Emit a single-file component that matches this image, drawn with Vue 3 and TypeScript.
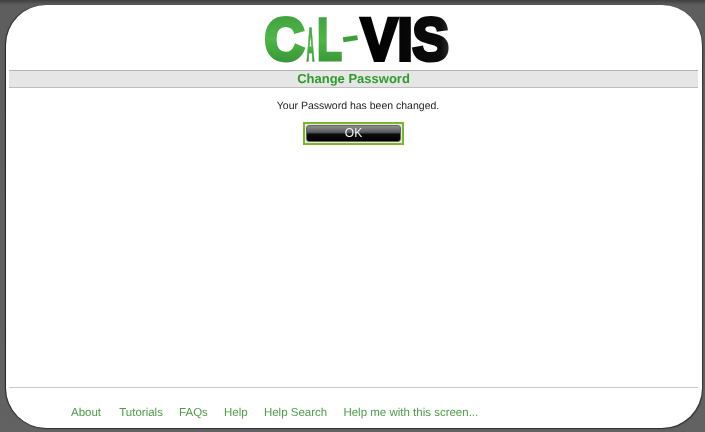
<script setup lang="ts">
const links: string[] = ['About', 'Tutorials', 'FAQs', 'Help', 'Help Search', 'Help me with this screen...']
</script>

<template>
  <div class="page">
    <div class="card">
      <header class="logo">
        <svg class="logo-art" width="190" height="52" viewBox="0 0 190 52" role="img" aria-label="CAL-VIS">
          <defs>
            <linearGradient id="gr" x1="0" y1="0" x2="0" y2="1">
              <stop offset="0" stop-color="#3b9a3a" />
              <stop offset="0.5" stop-color="#4fb548" />
              <stop offset="1" stop-color="#2f8a30" />
            </linearGradient>
            <linearGradient id="bk" x1="0" y1="0" x2="1" y2="0">
              <stop offset="0" stop-color="#000" />
              <stop offset="0.9" stop-color="#0c0c0c" />
              <stop offset="1" stop-color="#2a2a2a" />
            </linearGradient>
          </defs>
          <text class="glyph g" x="1.5" y="46.5" font-size="60" textLength="40" lengthAdjust="spacingAndGlyphs">C</text>
          <text class="glyph g thin" x="43.5" y="48" font-size="48" textLength="8" lengthAdjust="spacingAndGlyphs">A</text>
          <text class="glyph g narrow" x="54" y="47" font-size="60" textLength="25" lengthAdjust="spacingAndGlyphs">L</text>
          <text class="dash" x="78" y="36.5" font-size="42" textLength="19" lengthAdjust="spacingAndGlyphs" transform="rotate(-8 87 26)">-</text>
          <text class="glyph k" x="98" y="47" font-size="60" textLength="88" lengthAdjust="spacingAndGlyphs">VIS</text>
        </svg>
      </header>
      <h1 class="band">Change Password</h1>
      <main class="body">
        <p class="msg">Your Password has been changed.</p>
        <div class="btn-frame">
          <button class="btn" type="button">OK</button>
        </div>
      </main>
      <footer class="foot">
        <a v-for="l in links" :key="l" class="link">{{ l }}</a>
      </footer>
    </div>
  </div>
</template>

<style>
html, body { margin: 0; padding: 0; background: #5f5f5f; }
</style>

<style scoped>
.page {
  width: 705px;
  height: 432px;
  box-sizing: border-box;
  padding: 5px 3px 4px 6px;
  background: linear-gradient(#3f3f3f 0, #5e5e5e 5px, #626262 100%);
  font-family: "Liberation Sans", Arial, sans-serif;
  text-rendering: geometricPrecision;
  overflow: hidden;
}
.card {
  height: 100%;
  box-sizing: border-box;
  padding: 0 4px 0 3px;
  background: #fff;
  border-radius: 40px;
  display: flex;
  flex-direction: column;
  box-shadow: -1px 0 1px #222, 1px 1px 1px #333;
}
.logo {
  height: 65px;
  box-sizing: border-box;
  padding-top: 8px;
  display: flex;
  justify-content: center;
}
.logo-art {
  display: block;
  filter: blur(0.5px);
  margin-left: 8px;
}
.glyph {
  font-family: "Liberation Sans", Arial, sans-serif;
  font-weight: 700;
  stroke-width: 4px;
  stroke-linejoin: miter;
}
.g { fill: url(#gr); stroke: url(#gr); }
.thin { stroke-width: 1.5px; }
.narrow { stroke-width: 3px; }
.k { fill: url(#bk); stroke: url(#bk); }
.dash {
  font-family: "Liberation Sans", Arial, sans-serif;
  font-weight: 700;
  fill: #3f9e3c;
}
.band {
  margin: 0;
  height: 18px;
  box-sizing: border-box;
  border-top: 1px solid #b3b3b3;
  border-bottom: 1px solid #bdbdbd;
  background: #e6e6e6;
  color: #2f9a2b;
  font-size: 13px;
  font-weight: 700;
  line-height: 16px;
  text-align: center;
  filter: blur(0.25px);
}
.body {
  flex: 1;
  display: flex;
  flex-direction: column;
  align-items: center;
  padding-top: 12px;
}
.msg {
  margin: 0 0 0 9px;
  font-size: 10.5px;
  line-height: 13px;
  color: #222;
  filter: blur(0.25px);
}
.btn-frame {
  margin-top: 9px;
  width: 101px;
  height: 23px;
  box-sizing: border-box;
  border: 2px solid #7ab829;
  padding: 1px;
  background: #e9e9e9;
}
.btn {
  display: block;
  width: 100%;
  height: 100%;
  padding: 0;
  border: 1px solid #666;
  border-radius: 3px;
  background: linear-gradient(#8f8f8f 0, #5a5a5a 42%, #0c0c0c 55%, #000 100%);
  color: #f2f2f2;
  font-family: inherit;
  font-size: 12px;
  line-height: 13px;
  filter: blur(0.25px);
}
.foot {
  height: 40px;
  box-sizing: border-box;
  border-top: 1px solid #c9c9c9;
  padding: 19px 0 0 62px;
  display: flex;
  gap: 16.2px;
  margin-bottom: 1px;
}
.link {
  color: #4c9c48;
  font-size: 11.5px;
  line-height: 13px;
  filter: blur(0.25px);
}
.link:first-child {
  margin-right: 2px;
}
</style>
